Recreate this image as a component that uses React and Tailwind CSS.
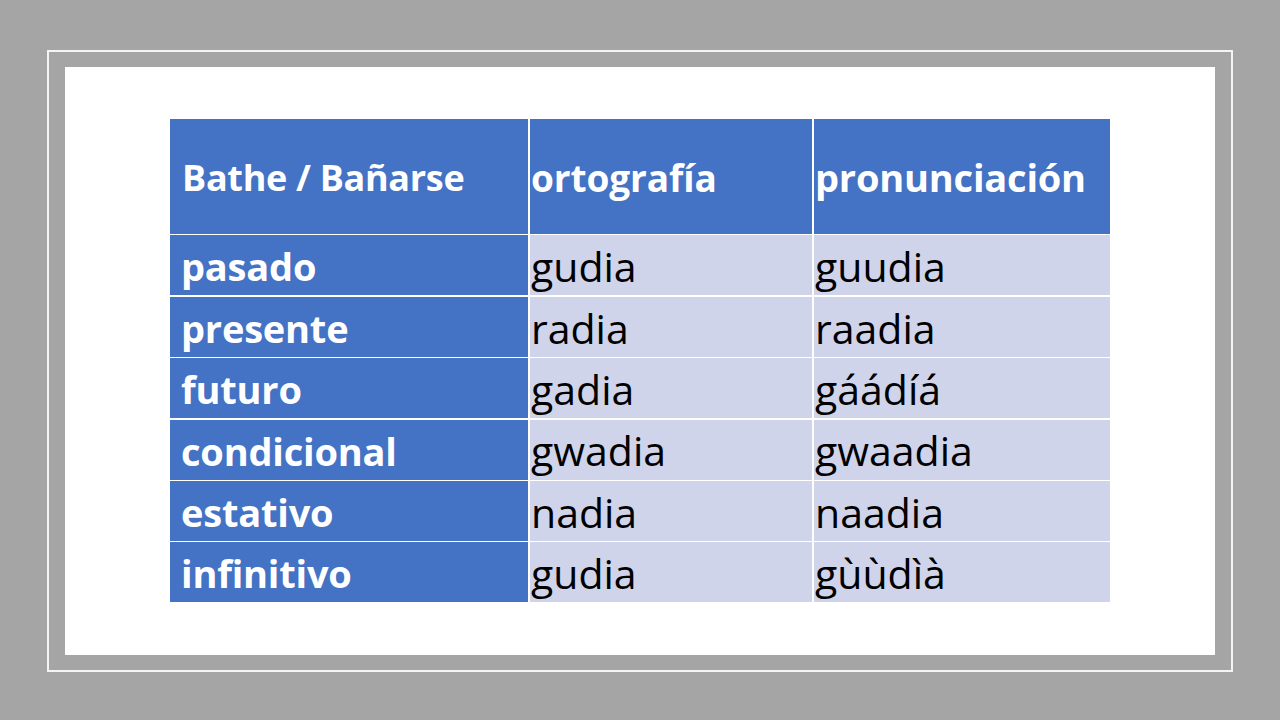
import { Fragment } from "react";

export default function App() {
  const rows = [
    ["pasado", "gudia", "guudia"],
    ["presente", "radia", "raadia"],
    ["futuro", "gadia", "gáádíá"],
    ["condicional", "gwadia", "gwaadia"],
    ["estativo", "nadia", "naadia"],
    ["infinitivo", "gudia", "gùùdìà"],
  ];
  const font = { fontFamily: '"Open Sans", "Noto Sans", sans-serif' };
  return (
    <div className="w-[1280px] h-[720px] bg-[#a5a5a5] pt-[50px] pl-[47px]" style={font}>
      <div className="w-[1186px] h-[622px] border-2 border-[#f4f4f4] pt-[15px] pl-[16px]">
        <div className="w-[1150px] h-[588px] bg-white pt-[52px] pl-[105px]">
          <div className="grid grid-cols-[358px_282px_296px] grid-rows-[115px_60px_60px_60px_60px_60px_60px] gap-x-[2px] gap-y-[1.4px] w-[940px]">
            <div className="bg-[#4472c4] flex items-center pl-[12px] pt-[2px] text-white font-bold text-[36px] tracking-[-0.3px]">
              Bathe / Bañarse
            </div>
            <div className="bg-[#4472c4] flex items-center pl-[1px] pt-[2px] text-white font-bold text-[37px] tracking-[-0.1px]">
              ortografía
            </div>
            <div className="bg-[#4472c4] flex items-center pl-[1px] pt-[2px] text-white font-bold text-[38px] tracking-[-0.2px]">
              pronunciación
            </div>
            {rows.map((r) => (
              <Fragment key={r[0]}>
                <div className="bg-[#4472c4] flex items-center pl-[11px] pt-[3px] text-white font-bold text-[38px] tracking-[-0.2px]">
                  {r[0]}
                </div>
                <div className="bg-[#cfd4ea] flex items-center pl-[1px] pt-[3px] text-black text-[41px]">
                  {r[1]}
                </div>
                <div className="bg-[#cfd4ea] flex items-center pl-[1px] pt-[3px] text-black text-[41px]">
                  {r[2]}
                </div>
              </Fragment>
            ))}
          </div>
        </div>
      </div>
    </div>
  );
}
